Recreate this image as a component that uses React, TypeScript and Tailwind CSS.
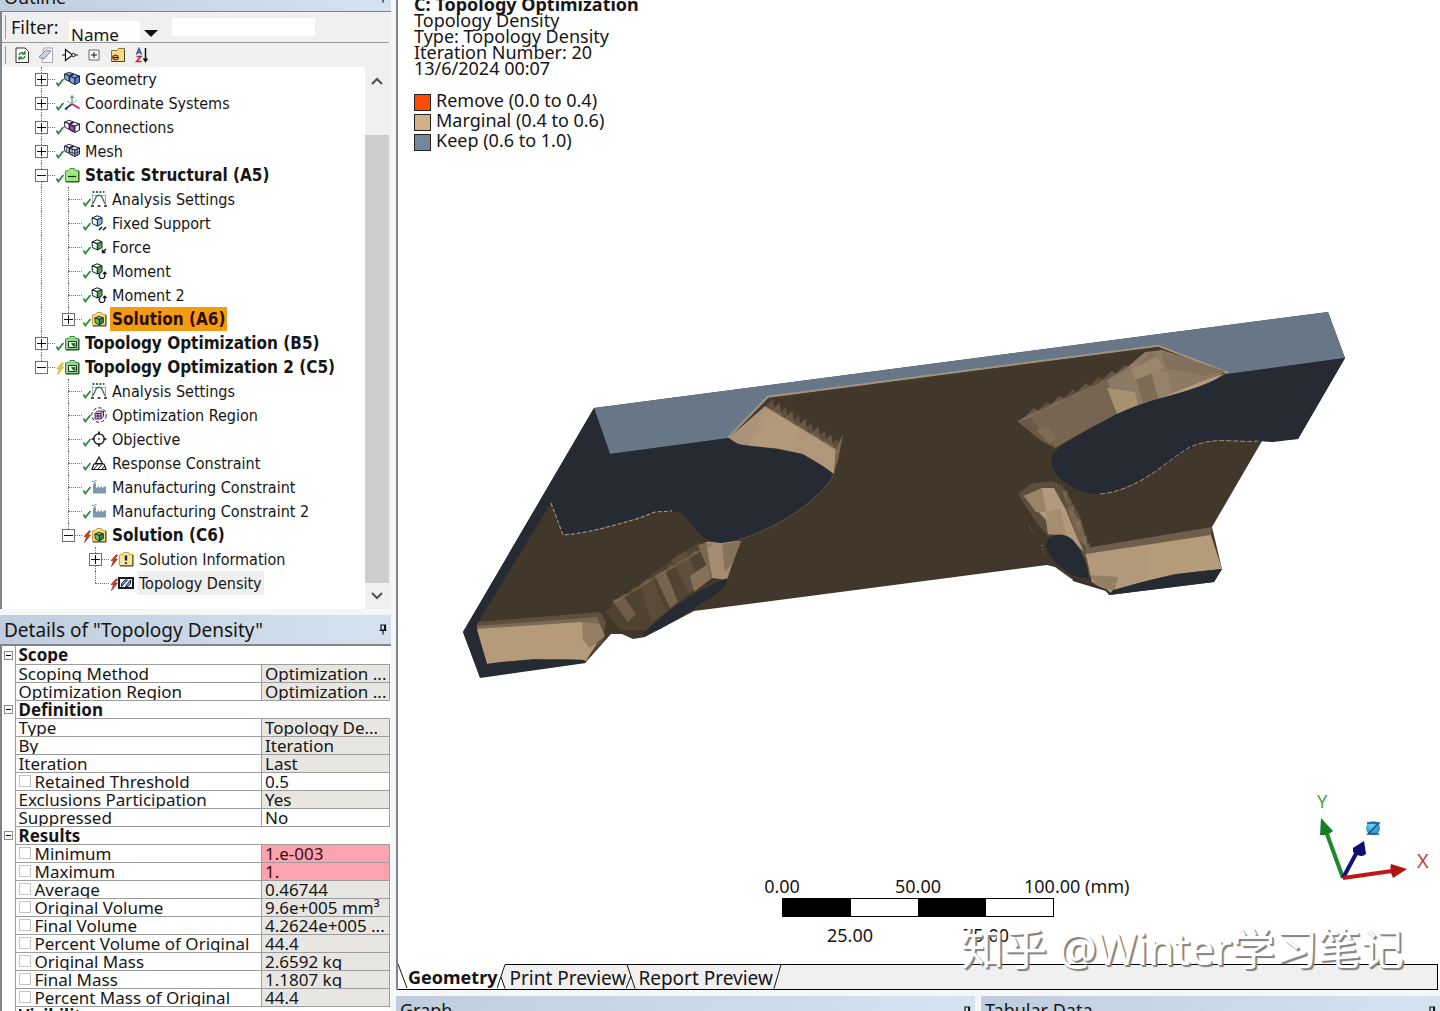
import type { ReactNode } from "react";

/* ---------- tree icons (16 x 16) ---------- */

function Icon({ children }: { children: ReactNode }) {
  return (
    <svg viewBox="0 0 16 16" className="h-4 w-4 shrink-0" aria-hidden="true">
      {children}
    </svg>
  );
}

function Cube({ x = 0, y = 0, s = 1, face = "#fff", side = "#5fa85a" }: { x?: number; y?: number; s?: number; face?: string; side?: string }) {
  return (
    <g transform={`translate(${x} ${y}) scale(${s})`} stroke="#15202a" strokeWidth="1" strokeLinejoin="round">
      <path d="M1 3 6 .8 11 2.6 6.4 4.6Z" fill={face} />
      <path d="M1 3 6.4 4.6V11L1.4 8.6Z" fill={face} />
      <path d="M6.4 4.6 11 2.6V8.6L6.4 11Z" fill={side} />
    </g>
  );
}

function Folder({ fill, stroke }: { fill: string; stroke: string }) {
  return (
    <>
      <path d="M1.5 4 4.5 3.5 6 1.5H10.5L11.5 3.5H14.5V14.5H1.5Z" fill={fill} stroke={stroke} />
      <path d="M2 15H15V4" fill="none" stroke="#2b3a24" />
    </>
  );
}

const twinCubes = (a: string, b: string) => (
  <Icon>
    <Cube x={-0.5} y={0.5} s={0.9} face={a} side={b} />
    <Cube x={4.5} y={2.5} s={1} face={a} side={b} />
  </Icon>
);

const icons: Record<string, ReactNode> = {
  geometry: twinCubes("#86a3e4", "#5477cf"),
  coords: (
    <Icon>
      <path d="M8 9V1M6.5 3 8 .8 9.5 3" stroke="#4ea56a" strokeWidth="1.3" fill="none" />
      <path d="M8 9 1 14M3.5 13.6 1 14" stroke="#28347c" strokeWidth="1.8" fill="none" />
      <path d="M8 9 15.5 13.5" stroke="#c02a3c" strokeWidth="1.8" />
      <path d="M3 6 8 9 13 5" stroke="#6fb7c9" fill="none" />
    </Icon>
  ),
  connections: (
    <Icon>
      <Cube x={-0.5} y={0.5} s={0.9} face="#f5e9f7" side="#9a3fae" />
      <Cube x={4.5} y={2.5} s={1} face="#f5e9f7" side="#f5e9f7" />
      <path d="M5.500 6 10 7.500V12.500L6 11Z" fill="#a64bb8" stroke="#3b1746" strokeWidth=".8" />
    </Icon>
  ),
  mesh: (
    <Icon>
      <Cube x={-0.5} y={0.5} s={0.9} face="#e6e4f5" side="#a9a3cf" />
      <Cube x={4.5} y={2.5} s={1} face="#e6e4f5" side="#c9c5e4" />
      <path d="M8.200 6.500V12.500M5.500 9 11 10.500 15.500 8.500M13.200 6V12.500M2.800 4V9" stroke="#222044" strokeWidth=".8" fill="none" />
    </Icon>
  ),
  structural: (
    <Icon>
      <Folder fill="#9bea80" stroke="#4f9a3f" />
      <path d="M4 9.5H12" stroke="#222" strokeWidth="1.2" />
    </Icon>
  ),
  settings: (
    <Icon>
      <path d="M1.5 3V14M14.5 3V14" stroke="#9fb4ae" />
      <path d="M1.500 1H13.500" stroke="#222" strokeWidth="1.6" strokeDasharray="2 1.5" />
      <path d="M1.500 4.500H14.500" stroke="#9fb4ae" />
      <path d="M1 13C4 12 4 5 6.500 4.500H9.500C12 5 12 12 15 13" stroke="#47685f" fill="none" strokeWidth="1.3" />
      <path d="M0 15H3M6.500 15H9.500M13 15H16" stroke="#222" strokeWidth="1.4" />
    </Icon>
  ),
  fixed: (
    <Icon>
      <Cube face="#fff" side="#7cc4ec" />
      <path d="M8 15 11 12M12 15 15 12" stroke="#111" strokeWidth="1.500" />
    </Icon>
  ),
  force: (
    <Icon>
      <Cube face="#e9f7e4" side="#58a650" />
      <path d="M15 10 12 13M11.500 10.500V13.500H14.500" stroke="#111" strokeWidth="1.400" fill="none" />
    </Icon>
  ),
  moment: (
    <Icon>
      <Cube face="#e9f7e4" side="#58a650" />
      <path d="M9.500 10.500A2.800 2.800 0 1 0 13.800 12.500" stroke="#111" strokeWidth="1.200" fill="none" />
      <path d="M13.800 13V9.500M12 11 13.800 9.200 15.600 11" stroke="#111" strokeWidth="1.200" fill="none" />
    </Icon>
  ),
  solution: (
    <Icon>
      <Folder fill="#f5e27c" stroke="#c99a3c" />
      <Cube x={3} y={4.500} s={0.850} face="#6cc25a" side="#2f8a45" />
    </Icon>
  ),
  topology: (
    <Icon>
      <Folder fill="#8fdd84" stroke="#3f8c46" />
      <path d="M4.500 6.500H12.500V12.500H4.500Z" fill="#e6f7dc" stroke="#1d3a26" />
      <path d="M7 8H11.500V11.500H9Z" fill="#2f6a49" />
    </Icon>
  ),
  region: (
    <Icon>
      <circle cx="8" cy="8" r="7.200" fill="none" stroke="#222" strokeDasharray="3.500 2" />
      <path d="M4 6.500 6.500 4H12.500V9.500L10 12H4Z" fill="#d9b4e2" stroke="#4b2a5c" />
      <path d="M4 9H10M7 6.500V12M10 6.500V12M10 6.500 12.500 4M4 6.500H10" stroke="#4b2a5c" />
    </Icon>
  ),
  objective: (
    <Icon>
      <circle cx="8" cy="8" r="5.200" fill="#fff" stroke="#111" strokeWidth="1.300" />
      <path d="M8 .5V3.500M8 12.500V15.500M.5 8H3.500M12.500 8H15.500M7.300 8H8.700" stroke="#111" strokeWidth="1.700" />
    </Icon>
  ),
  response: (
    <Icon>
      <path d="M8 2 11.500 8.500H4.500Z" fill="#fff" stroke="#111" strokeWidth="1.200" />
      <path d="M3 9H13L15 14.500H1Z" fill="#fff" stroke="#111" strokeWidth="1.200" />
      <path d="M3 14 7 9.500M7 14 11 9.500M11 14 13.500 11" stroke="#111" />
    </Icon>
  ),
  factory: (
    <Icon>
      <path d="M2 14.500V4.500H5V9L8 7V9L11 7V9L15 7V14.500Z" fill="#7f9ab0" />
      <path d="M1 2.500H3M3.500 1.500H5.500M3 3.500H5" stroke="#8b97a0" strokeWidth="1.200" />
    </Icon>
  ),
  info: (
    <Icon>
      <Folder fill="#fbe694" stroke="#c99a3c" />
      <path d="M8 4.500V9.500" stroke="#1b1b7c" strokeWidth="2.400" />
      <path d="M8 11.200V13" stroke="#1b1b7c" strokeWidth="2" />
    </Icon>
  ),
  density: (
    <Icon>
      <path d="M1 3H15V13H1Z" fill="#e9eff8" stroke="#141c2c" strokeWidth="2" />
      <path d="M3.500 11.500V8.500L7 5H9.500ZM7.500 11.500 12.500 5V8.500L10 11.500Z" fill="#8fa3c2" stroke="#1b2741" />
    </Icon>
  ),
};

function Status({ kind }: { kind: "ok" | "bolt" | "pending" }) {
  return (
    <svg viewBox="0 0 9 16" className="h-4 w-[9px] shrink-0" aria-hidden="true">
      {kind === "ok" ? (
        <path d="M1.500 11.500 3.300 14.500 8.500 8" fill="none" stroke="#2c8a35" strokeWidth="1.800" />
      ) : (
        <path
          d="M7.500 3.500 2 9.500H4.500L2.500 15.500 8.500 8H5.800L8.500 4.500Z"
          fill={kind === "bolt" ? "#d9391c" : "#f2d22e"}
          stroke={kind === "bolt" ? "#8c1f12" : "#c08f1a"}
          strokeWidth=".6"
        />
      )}
    </svg>
  );
}

/* ---------- outline tree ---------- */

type Node = {
  label: string;
  icon: string;
  rails: boolean[];
  last?: boolean;
  open?: boolean;
  status?: "ok" | "bolt" | "pending";
  bold?: boolean;
  tone?: "active" | "selected";
};

const L1: boolean[] = [];
const A: boolean[] = [true];
const C: boolean[] = [false];
const C2: boolean[] = [false, false];

const nodes: Node[] = [
  { label: "Geometry", icon: "geometry", rails: L1, open: false },
  { label: "Coordinate Systems", icon: "coords", rails: L1, open: false },
  { label: "Connections", icon: "connections", rails: L1, open: false },
  { label: "Mesh", icon: "mesh", rails: L1, open: false },
  { label: "Static Structural (A5)", icon: "structural", rails: L1, open: true, bold: true },
  { label: "Analysis Settings", icon: "settings", rails: A },
  { label: "Fixed Support", icon: "fixed", rails: A },
  { label: "Force", icon: "force", rails: A },
  { label: "Moment", icon: "moment", rails: A },
  { label: "Moment 2", icon: "moment", rails: A },
  { label: "Solution (A6)", icon: "solution", rails: A, last: true, open: false, bold: true, tone: "active" },
  { label: "Topology Optimization (B5)", icon: "topology", rails: L1, open: false, bold: true },
  { label: "Topology Optimization 2 (C5)", icon: "topology", rails: L1, last: true, open: true, bold: true, status: "pending" },
  { label: "Analysis Settings", icon: "settings", rails: C },
  { label: "Optimization Region", icon: "region", rails: C },
  { label: "Objective", icon: "objective", rails: C },
  { label: "Response Constraint", icon: "response", rails: C },
  { label: "Manufacturing Constraint", icon: "factory", rails: C },
  { label: "Manufacturing Constraint 2", icon: "factory", rails: C },
  { label: "Solution (C6)", icon: "solution", rails: C, last: true, open: true, bold: true, status: "bolt" },
  { label: "Solution Information", icon: "info", rails: C2, open: false, status: "bolt" },
  { label: "Topology Density", icon: "density", rails: C2, last: true, status: "bolt", tone: "selected" },
];

function TreeRow({ node }: { node: Node }) {
  const tone =
    node.tone === "active" ? "bg-[#f39c12] text-[#2b0d08]" : node.tone === "selected" ? "bg-[#efefef]" : "";
  return (
    <li className="flex h-6 items-center pl-[26px]">
      {node.rails.map((on, i) => (
        <span key={i} className="flex h-6 w-[27px] shrink-0 pl-[13px]">
          {on && <span className="border-l border-dotted border-[#777]" />}
        </span>
      ))}
      <span className="relative flex h-6 w-[27px] shrink-0 flex-col pl-[13px]">
        <span className="h-3 border-l border-dotted border-[#777]" />
        <span className={`h-3 border-t border-dotted border-t-[#777] ${node.last ? "" : "border-l border-l-[#777]"}`} />
        {node.open !== undefined && (
          <button
            aria-label={`${node.open ? "Collapse" : "Expand"} ${node.label}`}
            className="absolute top-[6px] left-[7px] flex h-[13px] w-[13px] items-center justify-center border border-[#6f6f6f] bg-white"
          >
            <svg viewBox="0 0 9 9" className="h-[9px] w-[9px]">
              <path d={node.open ? "M0 4.500H9" : "M0 4.500H9M4.500 0V9"} stroke="#111" />
            </svg>
          </button>
        )}
      </span>
      <Status kind={node.status ?? "ok"} />
      {icons[node.icon]}
      <span className={`ml-[3px] h-6 px-0.5 leading-[25px] whitespace-nowrap ${node.bold ? "text-[17px] font-bold" : "text-[16px]"} ${tone}`}>
        {node.label}
      </span>
    </li>
  );
}

function Pin() {
  return (
    <svg viewBox="0 0 8 11" className="h-[11px] w-2 shrink-0" aria-hidden="true">
      <path d="M2 1H6.500V6H2ZM.5 6.500H7.500M4 6.500V10.500" fill="none" stroke="#111" strokeWidth="1.200" />
      <path d="M5.800 1V6" stroke="#111" strokeWidth="1.500" />
    </svg>
  );
}

function Toolbar() {
  return (
    <div className="flex h-6 items-center gap-2 pl-px">
      <span className="h-[18px] w-[3px] border-r border-[#9a9a9a]" />
      <button aria-label="Refresh" className="w-4">
        <Icon>
          <path d="M2 1H11L14.500 4.500V15.500H2Z" fill="#fff" stroke="#333" />
          <path d="M5 8A3 3 0 0 1 10 6.500M10.800 4V7H8M11 9A3 3 0 0 1 6 10.800M5.200 13V10.200H8" fill="none" stroke="#2f8a35" strokeWidth="1.500" />
        </Icon>
      </button>
      <button aria-label="Clear" className="w-4">
        <Icon>
          <path d="M6 1H14.500V15.500H4V9Z" fill="#fafafa" stroke="#aaa" />
          <path d="M1 10 8 3 13 4 6 12Z" fill="#c9cde0" stroke="#8a8fa8" />
        </Icon>
      </button>
      <button aria-label="Filter nodes" className="w-4">
        <Icon>
          <path d="M0 8H3.500M3.500 2.500V13.500L10.500 8ZM13 8H16" fill="#fff" stroke="#111" strokeWidth="1.200" />
          <circle cx="11.500" cy="8" r="1.700" fill="#fff" stroke="#111" />
        </Icon>
      </button>
      <button aria-label="Expand all" className="w-4">
        <Icon>
          <path d="M3 3H13V13H3Z" fill="#fff" stroke="#666" />
          <path d="M5 8H11M8 5V11" stroke="#111" />
        </Icon>
      </button>
      <button aria-label="Hide folders" className="w-4">
        <Icon>
          <path d="M1.500 3.500H7L8.500 1.500H14.500V14.500H1.500Z" fill="#f0dc86" stroke="#8a7430" />
          <path d="M1.500 14.500H14.500V3" fill="none" stroke="#4c4120" />
          <ellipse cx="5.500" cy="10.500" rx="3" ry="2.400" fill="#e9a56a" stroke="#5a1a14" />
          <path d="M3 10.500H8" stroke="#111" />
        </Icon>
      </button>
      <button aria-label="Sort A to Z" className="ml-px w-4">
        <Icon>
          <path d="M1.500 7.500 4 1.500 6.500 7.500M2.500 5.500H5.500" fill="none" stroke="#2f4c9a" strokeWidth="1.400" />
          <path d="M1.500 9.500H6L1.500 14.500H6.500" fill="none" stroke="#c1272d" strokeWidth="1.500" />
          <path d="M10.500 1V14M8.500 11.500 10.500 14.500 12.500 11.500" fill="none" stroke="#111" strokeWidth="1.500" />
        </Icon>
      </button>
    </div>
  );
}

function Chevron({ up }: { up?: boolean }) {
  return (
    <svg viewBox="0 0 12 8" className="h-2 w-3" aria-hidden="true">
      <path d={up ? "M1 7 6 2 11 7" : "M1 1 6 6 11 1"} fill="none" stroke="#505050" strokeWidth="2" />
    </svg>
  );
}

function Outline() {
  return (
    <section className="shrink-0">
      <header className="flex h-[11px] items-end justify-between overflow-hidden bg-linear-to-r from-[#bfcddd] to-[#d5e2f0] px-1 pb-1">
        <h2 className="text-[18px] leading-5">Outline</h2>
        <svg viewBox="0 0 8 3" className="mb-1 h-[3px] w-2" aria-hidden="true">
          <path d="M4 0V2.500" stroke="#111" strokeWidth="1.200" />
        </svg>
      </header>
      <div className="border-t border-l-2 border-[#7e848b] bg-[#f0f0f0] pr-0.5">
        <form className="flex h-[31px] items-center border-b border-[#9a9a9a] pl-px">
          <span className="mr-[5px] h-6 w-[3px] border-r border-[#9a9a9a]" />
          <label htmlFor="filter-kind" className="w-[58px] text-[18px] leading-6">
            Filter:
          </label>
          <span className="relative mt-[7px] flex h-5 w-[93px]">
            <select id="filter-kind" className="h-5 w-full appearance-none overflow-hidden bg-white pt-1 pl-0.5 text-[17px] leading-5">
              <option>Name</option>
            </select>
            <span className="pointer-events-none absolute top-0 right-0 flex h-5 w-[22px] items-center justify-center bg-[#f0f0f0] pt-1.5">
              <svg viewBox="0 0 14 7" className="h-[7px] w-[14px]" aria-hidden="true">
                <path d="M0 0H14L7 7Z" fill="#111" />
              </svg>
            </span>
          </span>
          <input aria-label="Filter text" className="ml-2.5 h-[18px] w-[143px] bg-white px-1 text-sm" />
        </form>
        <Toolbar />
        <div className="flex bg-white">
          <ul className="min-w-0 flex-1 pb-[14px] font-['DejaVu_Sans_Condensed','DejaVu_Sans',sans-serif]">
            {nodes.map((n, i) => (
              <TreeRow key={i} node={n} />
            ))}
          </ul>
          <div className="flex w-6 flex-col bg-[#f0f0f0]">
            <button aria-label="Scroll up" className="flex h-7 items-center justify-center">
              <Chevron up />
            </button>
            <div className="mt-10 flex-1 bg-[#cdcdcd]" />
            <button aria-label="Scroll down" className="flex h-[26px] items-center justify-center">
              <Chevron />
            </button>
          </div>
        </div>
      </div>
    </section>
  );
}

/* ---------- details ---------- */

type Detail = { name: string; value?: string; check?: boolean; shade?: "grey" | "pink" | "none" };

const groups: { title: string; rows: Detail[] }[] = [
  {
    title: "Scope",
    rows: [
      { name: "Scoping Method", value: "Optimization ..." },
      { name: "Optimization Region", value: "Optimization ..." },
    ],
  },
  {
    title: "Definition",
    rows: [
      { name: "Type", value: "Topology De..." },
      { name: "By", value: "Iteration" },
      { name: "Iteration", value: "Last" },
      { name: "Retained Threshold", value: "0.5", check: true, shade: "none" },
      { name: "Exclusions Participation", value: "Yes" },
      { name: "Suppressed", value: "No", shade: "none" },
    ],
  },
  {
    title: "Results",
    rows: [
      { name: "Minimum", value: "1.e-003", check: true, shade: "pink" },
      { name: "Maximum", value: "1.", check: true, shade: "pink" },
      { name: "Average", value: "0.46744", check: true },
      { name: "Original Volume", value: "9.6e+005 mm³", check: true },
      { name: "Final Volume", value: "4.2624e+005 ...", check: true },
      { name: "Percent Volume of Original", value: "44.4", check: true },
      { name: "Original Mass", value: "2.6592 kg", check: true },
      { name: "Final Mass", value: "1.1807 kg", check: true },
      { name: "Percent Mass of Original", value: "44.4", check: true },
    ],
  },
  { title: "Visibility", rows: [] },
];

function Details() {
  return (
    <section className="mt-1.5 min-h-0 flex-1 overflow-hidden">
      <header className="flex h-[29px] items-center justify-between bg-linear-to-r from-[#bfcddd] to-[#d5e2f0] px-1">
        <h2 className="text-[19px] leading-7">Details of "Topology Density"</h2>
        <Pin />
      </header>
      <div className="border-t-2 border-l-2 border-[#7e848b] bg-white pr-px">
        <table className="w-full table-fixed border-collapse text-[17px]">
          <colgroup>
            <col className="w-[13px]" />
            <col />
            <col className="w-[128px]" />
          </colgroup>
          {groups.map((g) => (
            <tbody key={g.title}>
              <tr className="h-[18px]">
                <td className="border-r border-[#9d9d9d] p-0">
                  <button aria-label={`Collapse ${g.title}`} className="ml-0.5 flex h-[9px] w-[9px] items-center justify-center border border-[#8c8c8c]">
                    <span className="h-px w-[5px] bg-black" />
                  </button>
                </td>
                <th colSpan={2} className="border-b border-[#9d9d9d] p-0 pl-[3px] text-left font-bold">
                  <div className="h-[17px] overflow-hidden leading-[17px]">{g.title}</div>
                </th>
              </tr>
              {g.rows.map((r) => (
                <tr key={r.name} className="h-[18px]">
                  <td className="border-r border-[#9d9d9d] p-0" />
                  <td className="border-r border-b border-[#9d9d9d] p-0 pl-[3px]">
                    <label className="flex h-[17px] gap-1 overflow-hidden leading-[18px] whitespace-nowrap">
                      {r.check && <input type="checkbox" className="mt-0.5 h-3 w-3 shrink-0 appearance-none border border-[#c4c4c4] bg-white" />}
                      {r.name}
                    </label>
                  </td>
                  <td
                    className={`border-r border-b border-[#9d9d9d] p-0 pl-[3px] ${
                      r.shade === "pink" ? "bg-[#fca3b0] text-[#3a0c12]" : r.shade === "none" ? "bg-white" : "bg-[#e7e6e3]"
                    }`}
                  >
                    <div className="h-[17px] overflow-hidden leading-[18px] whitespace-nowrap">{r.value}</div>
                  </td>
                </tr>
              ))}
            </tbody>
          ))}
        </table>
      </div>
    </section>
  );
}

/* ---------- optimised part ---------- */

type Facet = [points: string, fill: string, opacity?: number];

const facets: Facet[] = [
  // upper left pocket
  ["765,406 836,449 834,474 803,454 775,448 740,445 729,438", "#b0977a"],
  ["765,406 758,425 748,446 740,445 729,438", "#a9917a", 0.8],
  ["775,412 800,428 790,450 752,446", "#b59c7d", 0.6],
  ["836,449 843,434 838,460 834,472", "#7d6a54"],
  // upper right pocket
  ["1055,448 1050,440 1017,421 1050,405 1107,380 1117,414 1090,428", "#776551"],
  ["1107,380 1130,365 1145,352 1162,350 1225,371 1205,386 1150,401 1117,414", "#8d7a64"],
  ["1107,388 1135,392 1138,405 1117,414", "#a8916f"],
  ["1162,352 1225,371 1205,376 1165,368", "#83705b"],
  ["1135,375 1150,368 1158,398 1143,403", "#7f6c57"],
  ["1150,368 1168,372 1172,394 1158,398", "#968169"],
  ["1130,365 1156,356 1165,368 1135,380", "#9b866c"],
  ["1158,399 1208,379 1226,373 1205,386", "#b39b7b"],
  ["1017,421 1030,418 1050,440 1055,448 1040,440", "#6a5946"],
  ["1036,430 1048,426 1056,438 1050,444", "#806d57"],
  // lower centre-right horn
  ["1018,494 1030,484 1052,481 1064,488 1080,516 1092,556 1090,578 1078,548 1064,535 1048,536 1036,522", "#5c4d3c"],
  ["1024,496 1042,488 1054,488 1066,510 1074,530 1084,552 1074,542 1060,535 1048,534 1046,520", "#b39a7c"],
  ["1024,496 1042,488 1046,512 1036,512", "#9a8468"],
  ["1046,512 1060,508 1066,534 1048,534", "#a58d71"],
  ["1066,506 1080,520 1088,548 1078,540", "#77654f"],
  // lower right foot
  ["1086,548 1212,527 1211,537 1084,557", "#6f5e4a"],
  ["1086,554 1211,535 1222,569 1175,574 1150,580 1111,593 1092,582", "#b59c7a"],
  ["1086,554 1150,546 1146,578 1111,593 1092,582", "#b1987a", 0.7],
  ["1090,575 1118,577 1114,591 1096,585", "#957f64"],
  // lower left foot
  ["476,622 600,612 606,622 603,642 586,658 478,632", "#5f503e"],
  ["477,626 597,617 600,624 478,632", "#7d6a54"],
  ["476,629 582,622 598,626 600,638 586,661 533,659 487,664", "#b59b7a"],
  ["582,622 600,624 605,636 590,648 583,640", "#937d63"],
  // lower left horn
  ["606,612 624,596 650,576 676,556 700,542 708,576 684,598 646,630 620,630", "#514332"],
  ["612,600 624,597 636,614 628,622", "#6f5d49"],
  ["655,576 665,570 678,602 670,608", "#76644e"],
  ["640,585 652,577 666,612 652,622", "#5b4b39"],
  ["672,560 686,551 700,580 690,594", "#5f4f3d"],
  ["690,576 708,564 712,578 694,592", "#85715a"],
  ["698,545 710,541 716,578 708,570", "#7b6852"],
  ["706,542 741,541 733,562 727,580 712,578", "#a38c70"],
  ["722,544 741,541 733,562 725,572", "#85725b"],
];

function ridge(x0: number, y0: number, x1: number, y1: number, n: number, h: number) {
  return Array.from({ length: n }, (_, i) => {
    const ax = x0 + ((x1 - x0) * i) / n;
    const ay = y0 + ((y1 - y0) * i) / n;
    const bx = x0 + ((x1 - x0) * (i + 1.6)) / n;
    const by = y0 + ((y1 - y0) * (i + 1.6)) / n;
    return `${ax},${ay} ${(ax + bx) / 2 + 3},${(ay + by) / 2 - h} ${bx},${by}`;
  });
}

const ridges = [
  ...ridge(765, 407, 836, 450, 11, 11),
  ...ridge(1020, 422, 1150, 360, 10, 9),
  ...ridge(1062, 492, 1088, 552, 8, 8),
  ...ridge(610, 606, 706, 548, 8, 6),
];

function Part() {
  return (
    <svg viewBox="398 0 1042 964" className="h-full w-full" role="img" aria-label="Topology density plot of the plate">
      <path
        fill="#42372b"
        d="M594 408 1328 312 1345 358 1298 439 1262 441 1212 527 1222 569 1214 582 1109 595 1106 590 1073 580 1055 567 1047 565 694 611 645 637 633 639 622 634 611 634 586 662 480 677 463 632Z"
      />
      <path fill="#677788" d="M594 408 1328 312 1345 358 1229 374 1161 346 770 396 729 438 610 454Z" />
      <path d="M728 438 768 397 1158 346 1228 373" fill="none" stroke="#a29381" strokeWidth="2.500" />
      <path d="M731 438 769 399 1158 348 1226 375" fill="none" stroke="#46392b" strokeWidth="2.500" />
      {facets.map(([points, fill, opacity], i) => (
        <polygon key={i} points={points} fill={fill} opacity={opacity ?? 1} />
      ))}
      {ridges.map((points, i) => (
        <polygon key={i} points={points} fill={i % 2 ? "#8b775f" : "#77654f"} opacity=".5" />
      ))}
      <g fill="#262b33">
        <path d="M594 408 610 454 729 438C733 448 760 444 803 455 815 460 826 468 834 474 826 492 800 510 780 522 762 533 740 541 722 543 702 543 696 528 680 512L655 512C640 515 630 521 610 525 595 530 585 534 563 535L551 503 476 626 487 664C510 660 560 658 584 660L586 663 480 678 463 632Z" />
        <path d="M1227 374 1345 358 1298 439 1273 442 1258 441C1240 442 1230 439 1216 440 1195 443 1188 450 1170 462 1150 475 1125 492 1100 494 1070 494 1053 474 1051 462 1052 446 1075 438 1117 414 1150 398 1190 394 1227 374Z" />
        <path d="M1046 542C1053 533 1063 532 1073 540 1084 553 1088 566 1089 579L1073 576 1056 563C1050 556 1046 550 1046 542Z" />
        <path d="M1109 595 1113 590C1140 583 1160 575 1222 569L1214 582Z" />
        <path d="M642 636C660 614 690 594 727 578 729 590 705 600 694 609L660 629Z" />
      </g>
      <path d="M551 503 563 535C590 533 615 525 640 518L655 512 672 511" fill="none" stroke="#b3a48e" strokeDasharray="4 2" />
      <path d="M834 474C822 498 780 528 735 541" fill="none" stroke="#5f5140" />
      <path d="M1100 494C1140 490 1165 462 1190 447 1215 436 1235 443 1258 441" fill="none" stroke="#a39077" strokeDasharray="5 2" />
      <path d="M1029 526 1036 536M1042 545 1044 556M1056 484 1064 486" stroke="#a39077" strokeDasharray="1 3" />
      <path d="M1073 580 1106 590 1110 594" fill="none" stroke="#3a3027" strokeWidth="2" />
    </svg>
  );
}

function Triad() {
  return (
    <svg viewBox="0 0 130 100" className="h-[100px] w-[130px]" role="img" aria-label="Axis triad">
      <defs>
        <radialGradient id="ball" cx=".4" cy=".3" r=".8">
          <stop offset="0" stopColor="#6fdcf5" />
          <stop offset="1" stopColor="#1a7ba6" />
        </radialGradient>
      </defs>
      <path d="M43 88 27 44" stroke="#1d8a2c" strokeWidth="4" />
      <path d="M21 28 33 41Q28 46 20 45Z" fill="#1b7a28" />
      <path d="M43 88 58 60" stroke="#12127a" strokeWidth="4" />
      <path d="M64 51 66 64Q61 69 53 62L53 58Z" fill="#0d0d70" />
      <path d="M43 88 92 81" stroke="#c01818" strokeWidth="4" />
      <path d="M107 79 91 74Q89 80 93 88Z" fill="#b11414" />
      <circle cx="73" cy="38" r="7" fill="url(#ball)" />
      <path d="M67 33H79L68 44H79" fill="none" stroke="#1450a8" strokeWidth="1.500" />
      <text x="17" y="18" fontSize="18" fill="#3aa845" fontFamily="Noto Sans, sans-serif">Y</text>
      <text x="117" y="78" fontSize="20" fill="#c94343" fontFamily="Noto Sans, sans-serif">X</text>
    </svg>
  );
}

function ScaleBar() {
  return (
    <div className="w-[272px] text-[18px] leading-5">
      <div className="flex justify-between">
        <span className="flex w-0 justify-center">0.00</span>
        <span className="flex w-0 justify-center">50.00</span>
        <span className="flex w-0 whitespace-nowrap">
          <span className="-ml-[30px]">100.00 (mm)</span>
        </span>
      </div>
      <div className="mt-0.5 grid h-[19px] grid-cols-4 border border-black bg-white">
        <span className="bg-black" />
        <span />
        <span className="bg-black" />
        <span />
      </div>
      <div className="mt-2 grid grid-cols-2 text-center">
        <span>25.00</span>
        <span>75.00</span>
      </div>
    </div>
  );
}

const legend = [
  { label: "Remove (0.0 to 0.4)", swatch: "bg-[#ff4a00]" },
  { label: "Marginal (0.4 to 0.6)", swatch: "bg-[#d0b189]" },
  { label: "Keep (0.6 to 1.0)", swatch: "bg-[#74879a]" },
];

function Viewport() {
  return (
    <div className="relative min-h-0 flex-1 bg-white">
      <Part />
      <div className="absolute -top-1 left-4 text-[18px] leading-4">
        <p className="font-bold">C: Topology Optimization</p>
        <p>Topology Density</p>
        <p>Type: Topology Density</p>
        <p>Iteration Number: 20</p>
        <p>13/6/2024 00:07</p>
        <ul className="mt-[14px] leading-5">
          {legend.map((l) => (
            <li key={l.label} className="flex h-5 items-center gap-[5px]">
              <span className={`mt-1 h-[17px] w-[17px] border border-[#222] ${l.swatch}`} />
              {l.label}
            </li>
          ))}
        </ul>
      </div>
      <div className="absolute right-[386px] bottom-[19px]">
        <ScaleBar />
      </div>
      <div className="absolute right-[10px] bottom-[74px]">
        <Triad />
      </div>
    </div>
  );
}

function Slant({ kind }: { kind: "start" | "first" | "mid" | "end" }) {
  const fills = {
    start: ["", "M0 0 9 24"],
    first: ["M8 0H12V25H8L4 13Z", "M0 24.500 8 .5H12M4 13 8 24.500"],
    mid: ["M0 0H12V25H0Z", "M0 24.500 5 12M0 .5H12M1 .5 9 24.500"],
    end: ["M0 0H12V25H0Z", "M0 .5H12M1 24.500 8 .5"],
  }[kind];
  return (
    <svg viewBox="0 0 12 25" className="h-[25px] w-3 shrink-0" aria-hidden="true">
      <path d={fills[0]} fill="#f0f0f0" />
      <path d={fills[1]} fill="none" stroke="#111" />
    </svg>
  );
}

function Tabs() {
  return (
    <div className="mr-0.5 flex h-[26px] border-r border-b border-black text-[19px] leading-[26px]">
      <Slant kind="start" />
      <button className="-ml-0.5 text-[18px] font-bold whitespace-nowrap">Geometry</button>
      <Slant kind="first" />
      <button className="border-t border-black bg-[#f0f0f0] whitespace-nowrap">Print Preview</button>
      <Slant kind="mid" />
      <button className="border-t border-black bg-[#f0f0f0] whitespace-nowrap">Report Preview</button>
      <Slant kind="end" />
      <div className="flex-1 border-t border-black bg-[#f0f0f0]" />
    </div>
  );
}

function DockTitle({ title }: { title: string }) {
  return (
    <header className="flex h-[15px] min-w-0 flex-1 items-start justify-between overflow-hidden bg-linear-to-r from-[#bfcddd] to-[#d5e2f0] px-1">
      <h2 className="pt-0.5 text-[18px] leading-6">{title}</h2>
      <span className="pt-[10px]">
        <Pin />
      </span>
    </header>
  );
}

export default function App() {
  return (
    <div className="flex h-screen overflow-hidden bg-[#f4f6f8] font-['Noto_Sans',sans-serif] text-[#161616]">
      <aside className="flex w-[391px] shrink-0 flex-col">
        <Outline />
        <Details />
      </aside>
      <main className="relative ml-[5px] flex min-w-0 flex-1 flex-col">
        <div className="flex min-h-0 flex-1 flex-col border-l-2 border-[#7e848b] bg-white">
          <Viewport />
          <Tabs />
        </div>
        <div className="mt-1.5 flex gap-1.5">
          <div className="flex w-[579px]">
            <DockTitle title="Graph" />
          </div>
          <DockTitle title="Tabular Data" />
        </div>
        <p className="pointer-events-none absolute right-9 bottom-[34px] font-['Noto_Sans','Noto_Sans_CJK_SC',sans-serif] text-[43px] leading-[56px] whitespace-nowrap text-white [text-shadow:1px_1px_0_#8a8a8a,2px_2px_1px_#7a7a7a]">
          知乎 @Winter学习笔记
        </p>
      </main>
    </div>
  );
}
